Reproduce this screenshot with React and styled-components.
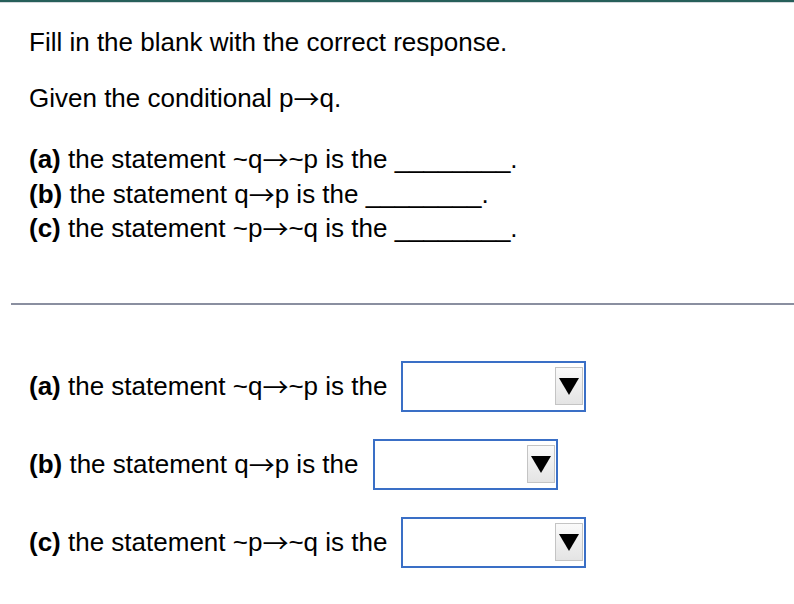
import React from "react";
import styled, { createGlobalStyle } from "styled-components";

const Global = createGlobalStyle`
  html, body { margin: 0; padding: 0; background: #fff; }
  body { font-family: "Liberation Sans", Arial, sans-serif; color: #000; }
`;

const Page = styled.div`
  width: 794px;
  height: 604px;
  overflow: hidden;
  border-top: 2px solid #265f5a;
  box-sizing: border-box;
`;

const TopShade = styled.div`
  height: 1px;
  background: #d4d8dc;
`;

const Question = styled.div`
  padding: 22px 0 0 29px;
  font-size: 26px;
  line-height: 34.5px;
`;

const Para = styled.p`
  margin: 0 0 ${(p) => p.$gap || 0}px;
`;

const Lines = styled.div`
  display: flex;
  flex-direction: column;
`;

const Arrow = styled.span`
  font-family: "Noto Sans CJK SC", "DejaVu Sans", sans-serif;
  font-weight: normal;
  display: inline-block;
  width: 26px;
  text-align: center;
  line-height: 1;
  vertical-align: -2px;
`;

const Divider = styled.hr`
  margin: 57px 0 0 11px;
  border: none;
  height: 2px;
  background: #8a8fa0;
`;

const Answers = styled.div`
  padding: 56px 0 0 29px;
  display: flex;
  flex-direction: column;
  gap: 27px;
  font-size: 26px;
`;

const Row = styled.div`
  display: flex;
  align-items: center;
  gap: 14px;
  height: 51px;
`;

const Select = styled.div`
  width: 185px;
  height: 51px;
  box-sizing: border-box;
  border: 2px solid #3a6fc6;
  background: #fff;
  display: flex;
  align-items: center;
  justify-content: flex-end;
  padding-right: 1px;
`;

const ArrowBtn = styled.div`
  width: 28px;
  height: 38px;
  box-sizing: border-box;
  border: 1px solid #c4c4c4;
  background: linear-gradient(#fafafa, #e4e4e4);
  display: flex;
  align-items: center;
  justify-content: center;
`;

const Dropdown = () => (
  <Select>
    <ArrowBtn>
      <svg width="20" height="18" viewBox="0 0 20 18">
        <polygon points="0,1 20,1 10,18" fill="#000" />
      </svg>
    </ArrowBtn>
  </Select>
);

const Stmt = ({ a, b }) => (
  <>
    {a}
    <Arrow>→</Arrow>
    {b}
  </>
);

const items = [
  ["(a)", "~q", "~p"],
  ["(b)", "q", "p"],
  ["(c)", "~p", "~q"],
];

const Label = ({ k, a, b }) => (
  <span>
    <b>{k}</b> the statement <Stmt a={a} b={b} /> is the
  </span>
);

export default function App() {
  return (
    <>
      <Global />
      <Page>
        <TopShade />
        <Question>
          <Para $gap={21.5}>Fill in the blank with the correct response.</Para>
          <Para $gap={26.5}>
            Given the conditional <Stmt a="p" b="q." />
          </Para>
          <Lines>
            {items.map(([k, a, b]) => (
              <span key={k}>
                <Label k={k} a={a} b={b} /> ________.
              </span>
            ))}
          </Lines>
        </Question>
        <Divider />
        <Answers>
          {items.map(([k, a, b]) => (
            <Row key={k}>
              <Label k={k} a={a} b={b} />
              <Dropdown />
            </Row>
          ))}
        </Answers>
      </Page>
    </>
  );
}
